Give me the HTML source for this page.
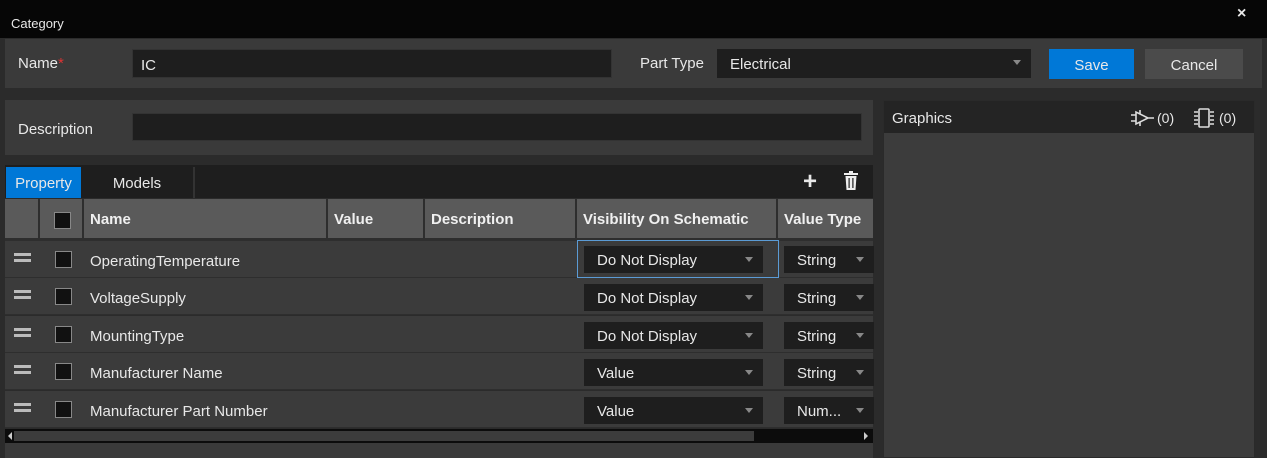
<!DOCTYPE html>
<html><head><meta charset="utf-8"><style>
*{margin:0;padding:0;box-sizing:border-box}
body{width:1267px;height:458px;background:#2b2b2b;font-family:"Liberation Sans",sans-serif;color:#e8e8e8;position:relative;overflow:hidden;font-size:15px}
.a{position:absolute}
.inp{position:absolute;background:#1e1e1e;border:1px solid #333}
.sel{position:absolute;background:#1e1e1e;font-size:15px;padding-left:13px;line-height:29px;height:27px}
.sel:after{content:"";position:absolute;right:10px;top:11px;border-left:4px solid transparent;border-right:4px solid transparent;border-top:5px solid #888}
.hd{position:absolute;top:199px;height:39px;line-height:41px;font-weight:bold;font-size:15px;border-right:2px solid #2e2e2e;padding-left:6px;color:#f0f0f0}
.row{position:absolute;left:5px;width:868px;height:37px;background:#3b3b3b;border-bottom:1px solid #2e2e2e}
.grip{position:absolute;left:9px;top:12px;width:17px;height:3px;background:#bbb;box-shadow:0 6px 0 #bbb}
.cb{position:absolute;left:50px;top:10px;width:17px;height:17px;background:#111;border:1px solid #888}
.nm{position:absolute;left:85px;top:2px;line-height:37px}
</style></head><body>
<div class="a" style="left:0;top:0;width:1267px;height:38px;background:#060606"></div>
<div class="a" style="left:11px;top:16px;font-size:13px">Category</div>
<div class="a" style="left:1237px;top:5px;font-size:16px;font-weight:bold">×</div>
<div class="a" style="left:5px;top:39px;width:1257px;height:49px;background:#3a3a3a"></div>
<div class="a" style="left:18px;top:55px">Name<span style="color:#d33">*</span></div>
<div class="inp" style="left:132px;top:49px;width:480px;height:29px"><span style="position:absolute;left:8px;top:7px">IC</span></div>
<div class="a" style="left:640px;top:55px">Part Type</div>
<div class="sel" style="left:717px;top:49px;width:314px;height:29px;line-height:31px">Electrical</div>
<div class="a" style="left:1049px;top:49px;width:85px;height:30px;background:#0078d7;text-align:center;line-height:33px">Save</div>
<div class="a" style="left:1145px;top:49px;width:98px;height:30px;background:#4b4b4b;text-align:center;line-height:33px">Cancel</div>
<div class="a" style="left:5px;top:100px;width:868px;height:55px;background:#3a3a3a"></div>
<div class="a" style="left:18px;top:121px">Description</div>
<div class="inp" style="left:132px;top:113px;width:730px;height:28px"></div>
<div class="a" style="left:883px;top:100px;width:372px;height:358px;background:#3c3c3c;border:1px solid #2a2a2a"></div>
<div class="a" style="left:884px;top:101px;width:370px;height:32px;background:#242424"></div>
<div class="a" style="left:892px;top:110px;font-size:15px">Graphics</div>
<svg class="a" style="left:1130px;top:108px" width="26" height="20" viewBox="0 0 26 20" fill="none" stroke="#ddd" stroke-width="1.6"><path d="M6 4v12l12-6z M1 7h5 M1 13h5 M18 10h6 M10 2v4 M10 14v4"/></svg>
<div class="a" style="left:1157px;top:110px;font-size:14px">(0)</div>
<svg class="a" style="left:1192px;top:107px" width="24" height="22" viewBox="0 0 24 22" fill="none" stroke="#ddd" stroke-width="1.6"><rect x="7" y="2" width="10" height="18" rx="1"/><path d="M2 5h4M2 9h4M2 13h4M2 17h4M18 5h4M18 9h4M18 13h4M18 17h4"/></svg>
<div class="a" style="left:1219px;top:110px;font-size:14px">(0)</div>
<div class="a" style="left:5px;top:165px;width:868px;height:33px;background:#1e1e1e"></div>
<div class="a" style="left:6px;top:167px;width:75px;height:31px;background:#0078d7;text-align:center;line-height:33px">Property</div>
<div class="a" style="left:81px;top:167px;width:114px;height:31px;border-right:2px solid #333;text-align:center;line-height:33px">Models</div>
<div class="a" style="left:803px;top:170px;font-size:24px;font-weight:bold;line-height:24px">+</div>
<svg class="a" style="left:843px;top:171px" width="16" height="19" viewBox="0 0 16 19" fill="#eee"><rect x="1" y="2" width="14" height="2"/><rect x="6" y="0" width="4" height="2"/><path d="M2.5 5h11l-1 14h-9zM5.5 7v10h1.2V7zM9.3 7v10h1.2V7z" fill-rule="evenodd"/></svg>
<div class="a" style="left:5px;top:199px;width:868px;height:39px;background:#5a5a5a"></div>
<div class="hd" style="left:5px;width:35px"></div>
<div class="hd" style="left:40px;width:44px"><div style="position:absolute;left:14px;top:13px;width:17px;height:17px;background:#111;border:1px solid #888"></div></div>
<div class="hd" style="left:84px;width:244px">Name</div>
<div class="hd" style="left:328px;width:97px">Value</div>
<div class="hd" style="left:425px;width:152px">Description</div>
<div class="hd" style="left:577px;width:201px">Visibility On Schematic</div>
<div class="hd" style="left:778px;width:95px;border:none">Value Type</div>
<div class="a" style="left:5px;top:238px;width:868px;height:3px;background:#2e2e2e"></div>

<div class="row" style="top:241px"><div class="grip"></div><div class="cb"></div><div class="nm">OperatingTemperature</div></div>
<div class="row" style="top:278px"><div class="grip"></div><div class="cb"></div><div class="nm">VoltageSupply</div></div>
<div class="row" style="top:316px"><div class="grip"></div><div class="cb"></div><div class="nm">MountingType</div></div>
<div class="row" style="top:353px"><div class="grip"></div><div class="cb"></div><div class="nm">Manufacturer Name</div></div>
<div class="row" style="top:391px"><div class="grip"></div><div class="cb"></div><div class="nm">Manufacturer Part Number</div></div>

<div class="a" style="left:577px;top:240px;width:202px;height:38px;border:1px solid #5b9bd5"></div>
<div class="sel" style="left:584px;top:246px;width:179px">Do Not Display</div>
<div class="sel" style="left:584px;top:284px;width:179px">Do Not Display</div>
<div class="sel" style="left:584px;top:322px;width:179px">Do Not Display</div>
<div class="sel" style="left:584px;top:359px;width:179px">Value</div>
<div class="sel" style="left:584px;top:397px;width:179px">Value</div>
<div class="sel" style="left:784px;top:246px;width:90px">String</div>
<div class="sel" style="left:784px;top:284px;width:90px">String</div>
<div class="sel" style="left:784px;top:322px;width:90px">String</div>
<div class="sel" style="left:784px;top:359px;width:90px">String</div>
<div class="sel" style="left:784px;top:397px;width:90px">Num...</div>
<div class="a" style="left:5px;top:429px;width:868px;height:14px;background:#0c0c0c"></div>
<div class="a" style="left:14px;top:431px;width:740px;height:10px;background:#3c3c3c"></div>
<div class="a" style="left:8px;top:432px;border-top:4px solid transparent;border-bottom:4px solid transparent;border-right:4px solid #ccc"></div>
<div class="a" style="left:864px;top:432px;border-top:4px solid transparent;border-bottom:4px solid transparent;border-left:4px solid #ccc"></div>
<div class="a" style="left:5px;top:443px;width:868px;height:15px;background:#3a3a3a"></div>
</body></html>
